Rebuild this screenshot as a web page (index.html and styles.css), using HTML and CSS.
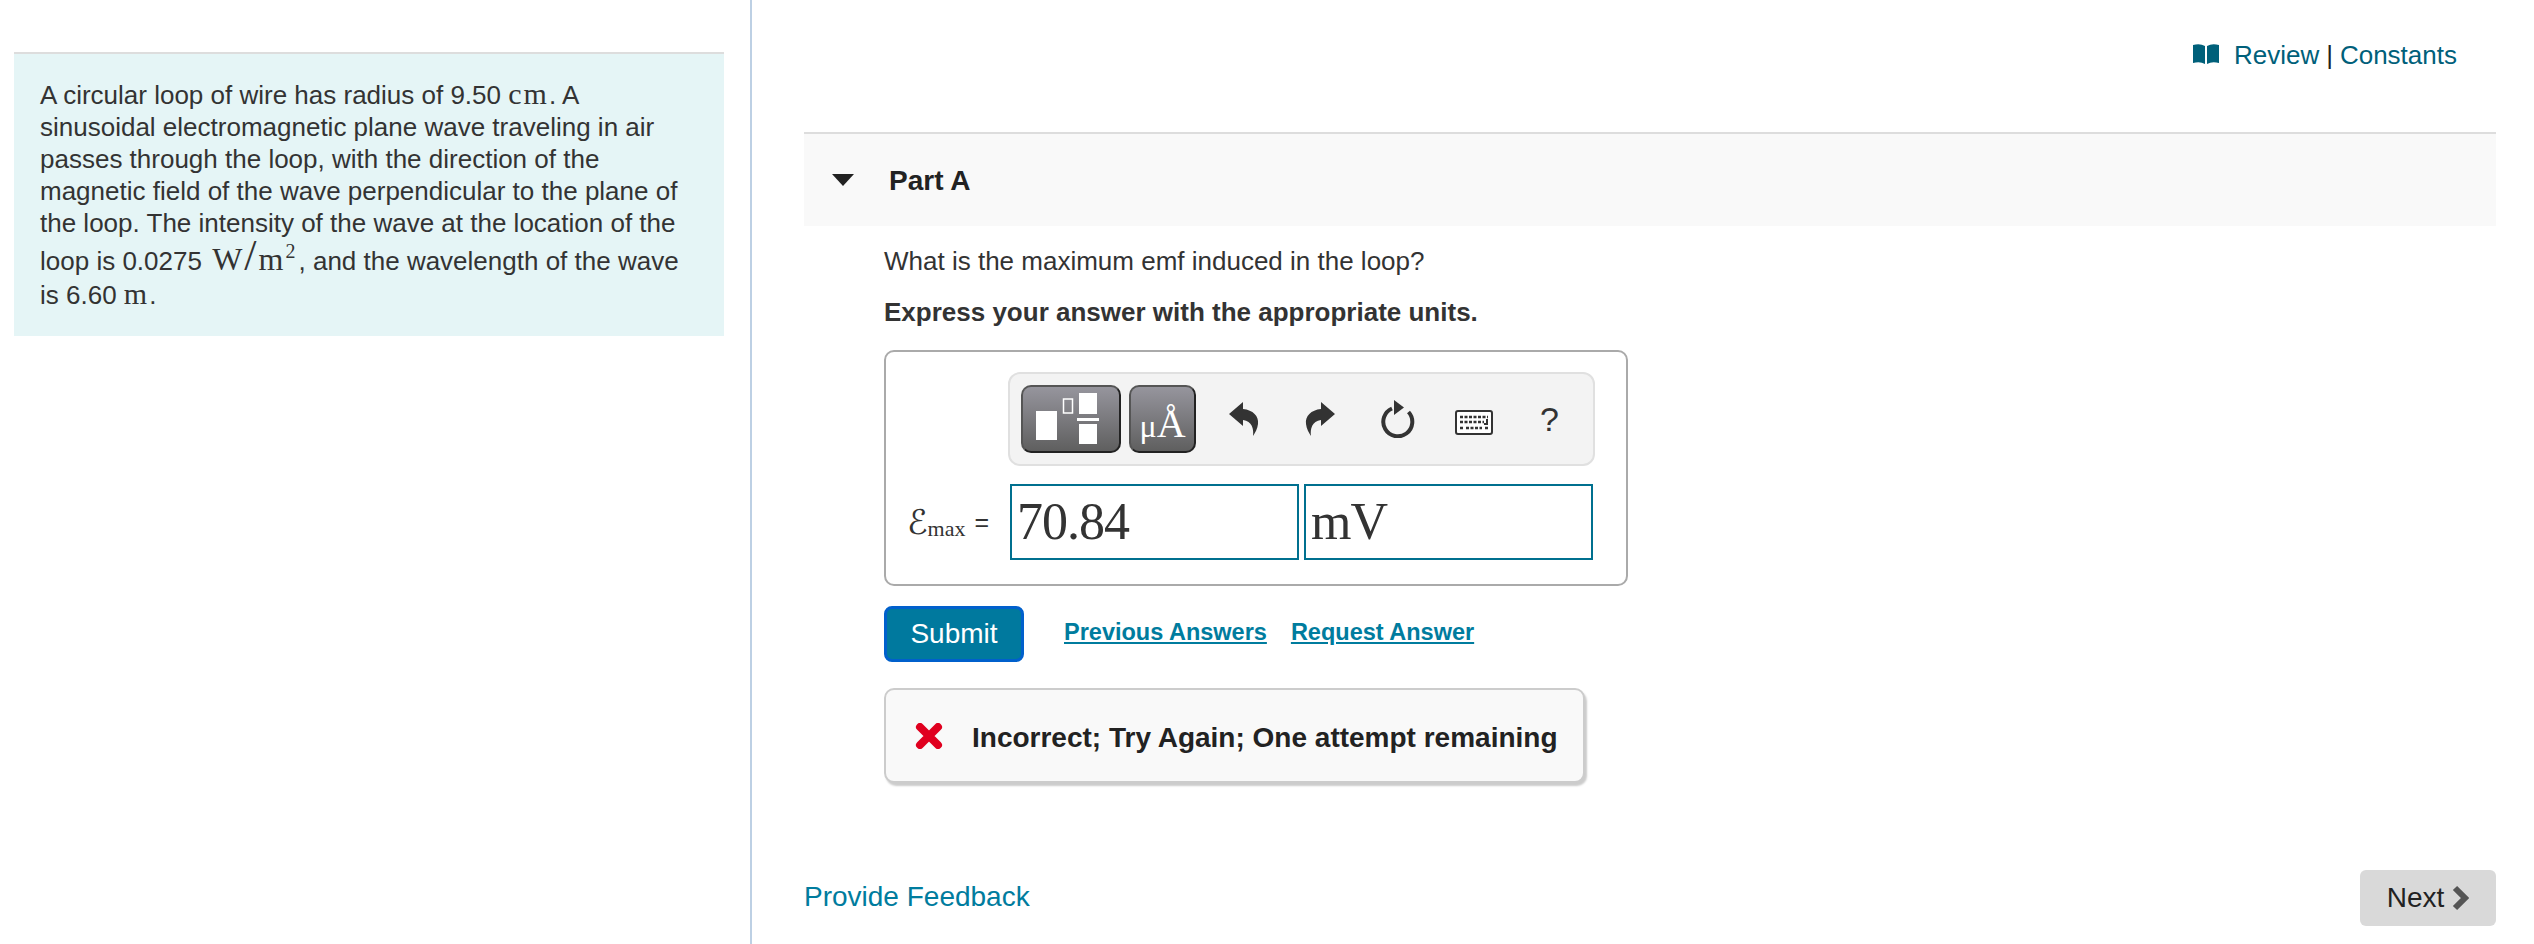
FILE: index.html
```html
<!DOCTYPE html>
<html lang="en">
<head>
  <meta charset="UTF-8">
  <title>Part A</title>
  <link rel="stylesheet" href="styles.css">
</head>
<body>
  <div class="left-col">
    <div class="intro">
      A circular loop of wire has radius of 9.50 <span class="math">cm</span>. A<br>
      sinusoidal electromagnetic plane wave traveling in air<br>
      passes through the loop, with the direction of the<br>
      magnetic field of the wave perpendicular to the plane of<br>
      the loop. The intensity of the wave at the location of the<br>
      loop is 0.0275 <span class="math big">W<span class="slash">/</span>m<sup>2</sup></span>, and the wavelength of the wave<br>
      is 6.60 <span class="math">m</span>.
    </div>
  </div>

  <div class="right-col">
    <div class="top-links">
      <svg class="book" width="26" height="20" viewBox="0 0 26 20">
        <path d="M0 1 Q7 -1 12 2 V20 Q7 17 0 19 Z M14 2 Q19 -1 26 1 V19 Q19 17 14 20 Z" fill="#00607a"/>
      </svg>
      <a href="#">Review</a> <span class="pipe">|</span> <a href="#">Constants</a>
    </div>

    <div class="part-head">
      <span class="arrow-down"></span>
      <span class="part-title">Part A</span>
    </div>

    <div class="part-body">
      <p class="question">What is the maximum emf induced in the loop?</p>
      <p class="question strong">Express your answer with the appropriate units.</p>

      <div class="answer-box">
        <div class="toolbar">
          <button class="tool tool-frac">
            <svg width="96" height="64" viewBox="0 0 96 64">
              <rect x="13" y="24" width="21" height="29" fill="#fff"/>
              <rect x="40.500" y="12" width="9" height="14" fill="none" stroke="#fff" stroke-width="1.500"/>
              <rect x="56" y="6" width="18" height="21" fill="#fff"/>
              <rect x="54" y="31" width="22" height="3" fill="#fff"/>
              <rect x="56" y="37" width="18" height="20" fill="#fff"/>
            </svg>
          </button>
          <button class="tool tool-units"><span class="mu">μ</span>Å</button>
          <svg class="icon icon-undo" width="30" height="34" viewBox="0 0 30 34">
            <path d="M0 12 L14 0 V7 C24 8 30 14 29 22 C28.500 27 26 31 24 34 C25 27 23 19 14 18 V24 Z" fill="#333"/>
          </svg>
          <svg class="icon icon-redo" width="30" height="34" viewBox="0 0 30 34">
            <path d="M30 12 L16 0 V7 C6 8 0 14 1 22 C1.500 27 4 31 6 34 C5 27 7 19 16 18 V24 Z" fill="#333"/>
          </svg>
          <svg class="icon icon-reset" width="36" height="38" viewBox="0 0 36 38">
            <path d="M12 8.500 A14.500 14.500 0 1 0 28.500 12" fill="none" stroke="#333" stroke-width="4"/>
            <path d="M14 0 L24 7.500 L14 15 Z" fill="#333"/>
          </svg>
          <svg class="icon icon-keys" width="38" height="25" viewBox="0 0 38 25">
            <rect x="1" y="1" width="36" height="23" rx="2" fill="#fff" stroke="#333" stroke-width="2"/>
            <path d="M5 7 H33 M5 12 H29 M5 18 H8 M11 18 H27 M30 18 H33" fill="none" stroke="#333" stroke-width="2.500" stroke-dasharray="3 1.500"/>
            <path d="M32 9 V14 H29" fill="none" stroke="#333" stroke-width="2"/>
          </svg>
          <span class="help">?</span>
        </div>
        <div class="input-row">
          <span class="eq-label"><span class="script-e">ℰ</span><sub>max</sub> <span class="equals">=</span></span>
          <div class="ans-input">70.84</div>
          <div class="ans-input">mV</div>
        </div>
      </div>

      <div class="actions">
        <button class="submit">Submit</button>
        <a class="act-link" href="#">Previous Answers</a>
        <a class="act-link" href="#">Request Answer</a>
      </div>

      <div class="feedback">
        <svg width="28" height="26" viewBox="0 0 28 26">
          <path d="M5 4 L23 22 M23 4 L5 22" fill="none" stroke="#e0001f" stroke-width="8" stroke-linecap="round"/>
        </svg>
        <span class="feedback-text">Incorrect; Try Again; One attempt remaining</span>
      </div>
    </div>

    <div class="footer">
      <a class="feedback-link" href="#">Provide Feedback</a>
      <button class="next">Next
        <svg width="17" height="26" viewBox="0 0 17 26">
          <path d="M3 3 L13 13 L3 23" fill="none" stroke="#555" stroke-width="6"/>
        </svg>
      </button>
    </div>
  </div>
</body>
</html>
```

FILE: styles.css
```css
* {
  box-sizing: border-box;
}
body {
  margin: 0;
  height: 944px;
  overflow: hidden;
  display: flex;
  font-family: "Liberation Sans", Arial, sans-serif;
  font-size: 26px;
  color: #333;
  background: #fff;
}
a {
  color: #007c9e;
  text-decoration: none;
}
button {
  font-family: inherit;
}
.left-col {
  width: 752px;
  flex: none;
  padding: 52px 26px 0 14px;
  border-right: 2px solid #bdd0e4;
}
.intro {
  height: 284px;
  padding: 25px 26px 0;
  border-top: 2px solid #ddd;
  background: #e5f5f6;
  line-height: 32px;
  white-space: nowrap;
}
.math {
  font-family: "Liberation Serif", serif;
  font-size: 30px;
  letter-spacing: 2px;
  line-height: 0;
}
.math.big {
  font-size: 32px;
  line-height: 40px;
  margin: 0 1px 0 3px;
}
.slash {
  font-size: 44px;
  font-weight: normal;
  line-height: 0;
}
.math sup {
  font-size: 20px;
  line-height: 0;
}
.right-col {
  flex: 1;
  padding: 0 38px 0 52px;
}
.top-links {
  height: 132px;
  padding: 40px 39px 0 0;
  display: flex;
  justify-content: flex-end;
  align-items: flex-start;
  gap: 7px;
  line-height: 30px;
}
.top-links a {
  color: #00607a;
}
.pipe {
  color: #222;
}
.book {
  margin: 4px 8px 0 0;
}
.part-head {
  height: 94px;
  display: flex;
  align-items: center;
  padding-left: 28px;
  gap: 35px;
  border-top: 2px solid #ddd;
  background: #f9f9f9;
}
.arrow-down {
  width: 0;
  height: 0;
  border-left: 11px solid transparent;
  border-right: 11px solid transparent;
  border-top: 12px solid #222;
}
.part-title {
  margin-top: 1px;
  font-size: 28px;
  font-weight: bold;
  color: #222;
}
.part-body {
  padding-left: 80px;
}
.question {
  margin: 19px 0 0;
  line-height: 32px;
}
.question.strong {
  font-weight: bold;
}
.answer-box {
  width: 744px;
  height: 236px;
  margin-top: 22px;
  padding-top: 20px;
  border: 2px solid #aaa;
  border-radius: 10px;
}
.toolbar {
  width: 587px;
  height: 94px;
  margin-left: 122px;
  padding-left: 11px;
  display: flex;
  align-items: center;
  background: #f3f3f3;
  border: 2px solid #e0e0e0;
  border-radius: 12px;
}
.tool {
  height: 68px;
  padding: 0;
  color: #fff;
  background: linear-gradient(#96959d, #5f5f5f);
  border: 2px solid #555;
  border-right-color: #222;
  border-bottom-color: #222;
  border-radius: 10px;
}
.tool-frac {
  width: 100px;
  margin-right: 8px;
}
.tool-units {
  width: 67px;
  font-family: "Liberation Serif", serif;
  font-size: 40px;
  line-height: 1;
  padding-top: 10px;
}
.mu {
  font-size: 32px;
}
.icon {
  flex: none;
}
.icon-undo {
  margin-left: 33px;
}
.icon-redo {
  margin-left: 46px;
}
.icon-reset {
  margin-left: 45px;
}
.icon-keys {
  margin: 6px 0 0 39px;
}
.help {
  margin-left: 47px;
  font-size: 34px;
}
.input-row {
  display: flex;
  margin-top: 18px;
  gap: 5px;
}
.eq-label {
  width: 119px;
  padding-left: 21px;
  display: flex;
  align-items: center;
  font-family: "Liberation Serif", serif;
  font-size: 25px;
}
.script-e {
  font-family: "DejaVu Sans", serif;
  font-size: 34px;
  font-style: italic;
}
.eq-label sub {
  font-size: 22px;
  align-self: flex-end;
  margin-bottom: 18px;
}
.equals {
  margin-left: 9px;
  font-family: "Liberation Sans", sans-serif;
}
.ans-input {
  width: 289px;
  height: 76px;
  padding-left: 5px;
  border: 2px solid #00708f;
  font-family: "Liberation Serif", serif;
  font-size: 52px;
  letter-spacing: -1px;
  line-height: 72px;
}
.actions {
  display: flex;
  align-items: center;
  margin-top: 20px;
  gap: 24px;
}
.submit {
  width: 140px;
  height: 56px;
  margin-right: 16px;
  color: #fff;
  font-size: 28px;
  background: #00799e;
  border: 3px solid #0060cc;
  border-radius: 8px;
}
.act-link {
  font-size: 23.5px;
  font-weight: bold;
  text-decoration: underline;
  margin-top: -4px;
}
.feedback {
  width: 701px;
  height: 95px;
  margin-top: 26px;
  padding-left: 29px;
  display: flex;
  align-items: center;
  gap: 29px;
  font-size: 28px;
  font-weight: bold;
  color: #222;
  background: #f9f9f9;
  border: 2px solid #ccc;
  border-radius: 10px;
  box-shadow: 2px 3px 2px #ccc;
}
.feedback-text {
  margin-top: 5px;
}
.footer {
  display: flex;
  justify-content: space-between;
  align-items: center;
  margin-top: 87px;
}
.feedback-link {
  font-size: 28px;
  margin-top: -3px;
}
.next {
  width: 136px;
  height: 56px;
  display: flex;
  justify-content: center;
  align-items: center;
  gap: 8px;
  font-size: 28px;
  color: #222;
  background: #d9d9d9;
  border: none;
  border-radius: 6px;
}
```
